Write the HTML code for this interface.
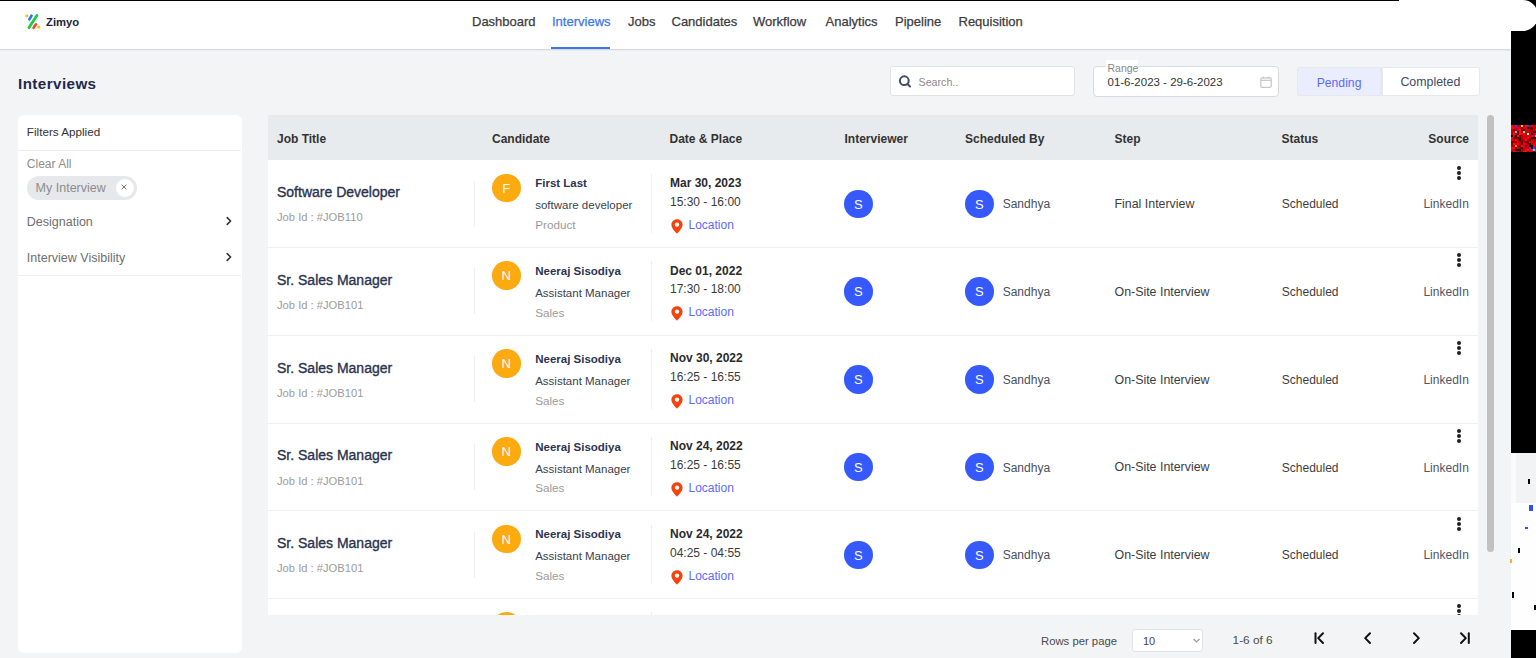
<!DOCTYPE html>
<html><head><meta charset="utf-8"><style>
html,body{margin:0;padding:0;}
body{width:1536px;height:658px;overflow:hidden;position:relative;background:#f3f4f6;font-family:"Liberation Sans", sans-serif;}
.t{position:absolute;line-height:1;white-space:nowrap;}
.r{position:absolute;}
.av{position:absolute;width:28.6px;height:28.6px;border-radius:50%;color:#fff;font-size:13px;line-height:30.2px;text-align:center;}
.av2{position:absolute;width:28.7px;height:28.7px;border-radius:50%;background:#3659fe;color:#fff;font-size:13px;line-height:30.2px;text-align:center;}
.dot{position:absolute;width:4px;height:4px;border-radius:50%;background:#1e1e1e;}
</style></head><body>
<div class="r" style="left:0px;top:0px;width:1536px;height:49px;background:#ffffff;"></div>
<div class="r" style="left:0px;top:49px;width:1511px;height:1px;background:#d7d9dc;"></div>
<div class="r" style="left:0px;top:50px;width:1511px;height:1px;background:#e9ebee;"></div>
<div class="r" style="left:0px;top:0px;width:1399px;height:1px;background:#000;"></div>
<svg class="r" style="left:22px;top:12px" width="20" height="20" viewBox="0 0 20 20">
<g stroke-linecap="round" fill="none">
<circle cx="4.85" cy="3.8" r="1.6" fill="#f9c512" stroke="none"/>
<line x1="9.5" y1="3.6" x2="7.4" y2="7.3" stroke="#1f7af6" stroke-width="2.7"/>
<line x1="15.0" y1="3.3" x2="6.9" y2="15.7" stroke="#1dc93e" stroke-width="2.7"/>
<line x1="14.0" y1="12.3" x2="11.6" y2="15.8" stroke="#e8522a" stroke-width="2.7"/>
<circle cx="16.8" cy="15.2" r="1.6" fill="#f9c512" stroke="none"/>
</g></svg>
<div class="t" style="left:46px;top:17.23px;font-size:11.3px;color:#1a2638;font-weight:bold;">Zimyo</div>
<div class="t" style="left:472px;top:15.20px;font-size:13px;color:#3c3c3c;font-weight:normal;-webkit-text-stroke:0.25px #3c3c3c;">Dashboard</div>
<div class="t" style="left:552px;top:15.20px;font-size:13px;color:#3a78ea;font-weight:normal;-webkit-text-stroke:0.25px #3a78ea;">Interviews</div>
<div class="t" style="left:628px;top:15.20px;font-size:13px;color:#3c3c3c;font-weight:normal;-webkit-text-stroke:0.25px #3c3c3c;">Jobs</div>
<div class="t" style="left:671.5px;top:15.20px;font-size:13px;color:#3c3c3c;font-weight:normal;-webkit-text-stroke:0.25px #3c3c3c;">Candidates</div>
<div class="t" style="left:753px;top:15.20px;font-size:13px;color:#3c3c3c;font-weight:normal;-webkit-text-stroke:0.25px #3c3c3c;">Workflow</div>
<div class="t" style="left:825.5px;top:15.20px;font-size:13px;color:#3c3c3c;font-weight:normal;-webkit-text-stroke:0.25px #3c3c3c;">Analytics</div>
<div class="t" style="left:895px;top:15.20px;font-size:13px;color:#3c3c3c;font-weight:normal;-webkit-text-stroke:0.25px #3c3c3c;">Pipeline</div>
<div class="t" style="left:958.5px;top:15.20px;font-size:13px;color:#3c3c3c;font-weight:normal;-webkit-text-stroke:0.25px #3c3c3c;">Requisition</div>
<div class="r" style="left:551px;top:47px;width:59px;height:2px;background:#3a78ea;"></div>
<div class="t" style="left:18px;top:75.93px;font-size:15.2px;color:#1d2a4d;font-weight:bold;letter-spacing:0.42px;">Interviews</div>
<div class="r" style="left:890px;top:66px;width:185px;height:30px;background:#fff;border:1px solid #e1e3e7;border-radius:3px;box-sizing:border-box;"></div>
<svg class="r" style="left:897px;top:73px" width="16" height="16" viewBox="0 0 16 16">
<circle cx="7.3" cy="7.7" r="4.4" stroke="#414c63" stroke-width="2" fill="none"/>
<line x1="10.5" y1="11" x2="13" y2="13.5" stroke="#414c63" stroke-width="2" stroke-linecap="round"/>
</svg>
<div class="t" style="left:918.5px;top:76.84px;font-size:10.7px;color:#8b8b8b;font-weight:normal;">Search..</div>
<div class="r" style="left:1093px;top:66px;width:186px;height:31px;background:#fff;border:1px solid #d8dade;border-radius:4px;box-sizing:border-box;"></div>
<div class="r" style="left:1106px;top:60px;width:32px;height:8px;background:#fff;"></div>
<div class="t" style="left:1107.5px;top:62.91px;font-size:10.5px;color:#868686;font-weight:normal;">Range</div>
<div class="t" style="left:1107.5px;top:77.07px;font-size:11.5px;color:#333;font-weight:normal;">01-6-2023 - 29-6-2023</div>
<svg class="r" style="left:1259px;top:75px" width="14" height="14" viewBox="0 0 14 14">
<rect x="1.8" y="2.8" width="10.4" height="9.6" rx="1.2" stroke="#c6c6c6" stroke-width="1.2" fill="none"/>
<line x1="1.8" y1="5.3" x2="12.2" y2="5.3" stroke="#c6c6c6" stroke-width="1.2"/>
<line x1="4.5" y1="1.5" x2="4.5" y2="3.5" stroke="#c6c6c6" stroke-width="1.2"/>
<line x1="9.5" y1="1.5" x2="9.5" y2="3.5" stroke="#c6c6c6" stroke-width="1.2"/>
</svg>
<div class="r" style="left:1297px;top:67px;width:183px;height:29px;background:#e6e8ec;border-radius:3px;"></div>
<div class="r" style="left:1298px;top:68px;width:82px;height:27px;background:#e9edfd;border-radius:2px 0 0 2px;"></div>
<div class="r" style="left:1382.5px;top:68px;width:96.5px;height:27px;background:#fff;border-radius:0 2px 2px 0;"></div>
<div class="t" style="left:1316.7px;top:76.57px;font-size:12.2px;color:#5b6cf2;font-weight:normal;">Pending</div>
<div class="t" style="left:1400.4px;top:76.40px;font-size:12.4px;color:#3d4a66;font-weight:normal;">Completed</div>
<div class="r" style="left:18px;top:115px;width:223.5px;height:538px;background:#fff;border-radius:6px;"></div>
<div class="t" style="left:26.8px;top:126.30px;font-size:11.7px;color:#333;font-weight:normal;">Filters Applied</div>
<div class="r" style="left:18px;top:150px;width:223px;height:1px;background:#eceef1;"></div>
<div class="t" style="left:26.8px;top:158.14px;font-size:12px;color:#8c8c8c;font-weight:normal;">Clear All</div>
<div class="r" style="left:26.5px;top:175.5px;width:110px;height:24px;background:#e7e8ec;border-radius:12px;"></div>
<div class="t" style="left:35.6px;top:182.22px;font-size:12.5px;color:#8c8c8c;font-weight:normal;">My Interview</div>
<div class="r" style="left:115.5px;top:178.5px;width:18px;height:18px;background:#fff;border-radius:50%;"></div>
<svg class="r" style="left:119.9px;top:183.1px" width="8" height="8" viewBox="0 0 8 8">
<line x1="1.6" y1="1.6" x2="6.4" y2="6.4" stroke="#666" stroke-width="0.9"/>
<line x1="6.4" y1="1.6" x2="1.6" y2="6.4" stroke="#666" stroke-width="0.9"/>
</svg>
<div class="t" style="left:26.8px;top:215.72px;font-size:12.5px;color:#6f6f6f;font-weight:normal;">Designation</div>
<div class="t" style="left:26.8px;top:251.82px;font-size:12.5px;color:#6f6f6f;font-weight:normal;">Interview Visibility</div>
<svg class="r" style="left:224px;top:215px" width="10" height="12" viewBox="0 0 10 12">
<polyline points="3.2,2.6 6.6,6 3.2,9.4" stroke="#333" stroke-width="1.6" fill="none" stroke-linecap="round" stroke-linejoin="round"/>
</svg>
<svg class="r" style="left:224px;top:251.3px" width="10" height="12" viewBox="0 0 10 12">
<polyline points="3.2,2.6 6.6,6 3.2,9.4" stroke="#333" stroke-width="1.6" fill="none" stroke-linecap="round" stroke-linejoin="round"/>
</svg>
<div class="r" style="left:18px;top:275px;width:223px;height:1px;background:#eceef1;"></div>
<div class="r" style="left:268px;top:115px;width:1210px;height:500px;background:#fff;overflow:hidden">
<div class="r" style="left:0px;top:0px;width:1210px;height:45px;background:#e8ebee;"></div>
<div class="t" style="left:9px;top:17.84px;font-size:12px;color:#333;font-weight:bold;">Job Title</div>
<div class="t" style="left:224px;top:17.84px;font-size:12px;color:#333;font-weight:bold;">Candidate</div>
<div class="t" style="left:401.5px;top:17.84px;font-size:12px;color:#333;font-weight:bold;">Date &amp; Place</div>
<div class="t" style="left:576.5px;top:17.84px;font-size:12px;color:#333;font-weight:bold;">Interviewer</div>
<div class="t" style="left:697px;top:17.84px;font-size:12px;color:#333;font-weight:bold;">Scheduled By</div>
<div class="t" style="left:846.5px;top:17.84px;font-size:12px;color:#333;font-weight:bold;">Step</div>
<div class="t" style="left:1013.5px;top:17.84px;font-size:12px;color:#333;font-weight:bold;">Status</div>
<div class="t" style="right:9px;top:17.84px;font-size:12px;color:#333;font-weight:bold;">Source</div>
<div class="r" style="left:0px;top:132.0px;width:1210px;height:1px;background:#eef0f2;"></div>
<div class="t" style="left:9px;top:70.05px;font-size:14px;color:#2a3350;font-weight:normal;-webkit-text-stroke:0.35px #2a3350;">Software Developer</div>
<div class="t" style="left:9px;top:97.32px;font-size:11.2px;color:#9b9b9b;font-weight:normal;">Job Id : #JOB110</div>
<div class="r" style="left:206px;top:65.5px;width:1px;height:46px;background:#eeeff1;"></div>
<div class="av" style="left:224px;top:58.7px;background:#fbaa10">F</div>
<div class="t" style="left:267.20000000000005px;top:63.27px;font-size:11.5px;color:#2d3450;font-weight:bold;">First Last</div>
<div class="t" style="left:267.20000000000005px;top:85.27px;font-size:11.5px;color:#3a3f4d;font-weight:normal;">software developer</div>
<div class="t" style="left:267.20000000000005px;top:104.10px;font-size:11.7px;color:#9b9b9b;font-weight:normal;">Product</div>
<div class="r" style="left:383px;top:58.7px;width:1px;height:59.5px;background:#eeeff1;"></div>
<div class="t" style="left:402px;top:61.84px;font-size:12px;color:#2b2b2b;font-weight:bold;">Mar 30, 2023</div>
<div class="t" style="left:402px;top:80.54px;font-size:12px;color:#3a3a3a;font-weight:normal;">15:30 - 16:00</div>
<svg class="r" style="left:402.5px;top:103.6px" width="12" height="15" viewBox="0 0 12 15">
<path d="M6 0.3C2.9 0.3 0.4 2.7 0.4 5.8c0 3.6 4.3 7.6 5.6 8.9c1.3-1.3 5.6-5.3 5.6-8.9C11.6 2.7 9.1 0.3 6 0.3z" fill="#f4430f"/>
<circle cx="6" cy="5.6" r="2.2" fill="#fff"/></svg>
<div class="t" style="left:420.5px;top:103.64px;font-size:12px;color:#5b6cf7;font-weight:normal;">Location</div>
<div class="av2" style="left:576px;top:74.5px">S</div>
<div class="av2" style="left:697px;top:74.5px">S</div>
<div class="t" style="left:734.7px;top:83.44px;font-size:12px;color:#4a4f5c;font-weight:normal;">Sandhya</div>
<div class="t" style="left:846.5px;top:83.10px;font-size:12.4px;color:#3d3d3d;font-weight:normal;">Final Interview</div>
<div class="t" style="left:1013.8px;top:83.44px;font-size:12px;color:#3d3d3d;font-weight:normal;">Scheduled</div>
<div class="t" style="right:9.200000000000045px;top:83.44px;font-size:12px;color:#505560">LinkedIn</div>
<div class="dot" style="left:1189.3px;top:50.7px"></div>
<div class="dot" style="left:1189.3px;top:55.6px"></div>
<div class="dot" style="left:1189.3px;top:60.6px"></div>
<div class="r" style="left:0px;top:219.75px;width:1210px;height:1px;background:#eef0f2;"></div>
<div class="t" style="left:9px;top:157.80px;font-size:14px;color:#2a3350;font-weight:normal;-webkit-text-stroke:0.35px #2a3350;">Sr. Sales Manager</div>
<div class="t" style="left:9px;top:185.07px;font-size:11.2px;color:#9b9b9b;font-weight:normal;">Job Id : #JOB101</div>
<div class="r" style="left:206px;top:153.25px;width:1px;height:46px;background:#eeeff1;"></div>
<div class="av" style="left:224px;top:146.45px;background:#fbaa10">N</div>
<div class="t" style="left:267.20000000000005px;top:151.02px;font-size:11.5px;color:#2d3450;font-weight:bold;">Neeraj Sisodiya</div>
<div class="t" style="left:267.20000000000005px;top:173.02px;font-size:11.5px;color:#3a3f4d;font-weight:normal;">Assistant Manager</div>
<div class="t" style="left:267.20000000000005px;top:191.85px;font-size:11.7px;color:#9b9b9b;font-weight:normal;">Sales</div>
<div class="r" style="left:383px;top:146.45px;width:1px;height:59.5px;background:#eeeff1;"></div>
<div class="t" style="left:402px;top:149.59px;font-size:12px;color:#2b2b2b;font-weight:bold;">Dec 01, 2022</div>
<div class="t" style="left:402px;top:168.29px;font-size:12px;color:#3a3a3a;font-weight:normal;">17:30 - 18:00</div>
<svg class="r" style="left:402.5px;top:191.35px" width="12" height="15" viewBox="0 0 12 15">
<path d="M6 0.3C2.9 0.3 0.4 2.7 0.4 5.8c0 3.6 4.3 7.6 5.6 8.9c1.3-1.3 5.6-5.3 5.6-8.9C11.6 2.7 9.1 0.3 6 0.3z" fill="#f4430f"/>
<circle cx="6" cy="5.6" r="2.2" fill="#fff"/></svg>
<div class="t" style="left:420.5px;top:191.39px;font-size:12px;color:#5b6cf7;font-weight:normal;">Location</div>
<div class="av2" style="left:576px;top:162.25px">S</div>
<div class="av2" style="left:697px;top:162.25px">S</div>
<div class="t" style="left:734.7px;top:171.19px;font-size:12px;color:#4a4f5c;font-weight:normal;">Sandhya</div>
<div class="t" style="left:846.5px;top:170.85px;font-size:12.4px;color:#3d3d3d;font-weight:normal;">On-Site Interview</div>
<div class="t" style="left:1013.8px;top:171.19px;font-size:12px;color:#3d3d3d;font-weight:normal;">Scheduled</div>
<div class="t" style="right:9.200000000000045px;top:171.19px;font-size:12px;color:#505560">LinkedIn</div>
<div class="dot" style="left:1189.3px;top:138.45px"></div>
<div class="dot" style="left:1189.3px;top:143.35px"></div>
<div class="dot" style="left:1189.3px;top:148.35px"></div>
<div class="r" style="left:0px;top:307.5px;width:1210px;height:1px;background:#eef0f2;"></div>
<div class="t" style="left:9px;top:245.55px;font-size:14px;color:#2a3350;font-weight:normal;-webkit-text-stroke:0.35px #2a3350;">Sr. Sales Manager</div>
<div class="t" style="left:9px;top:272.82px;font-size:11.2px;color:#9b9b9b;font-weight:normal;">Job Id : #JOB101</div>
<div class="r" style="left:206px;top:241.0px;width:1px;height:46px;background:#eeeff1;"></div>
<div class="av" style="left:224px;top:234.2px;background:#fbaa10">N</div>
<div class="t" style="left:267.20000000000005px;top:238.77px;font-size:11.5px;color:#2d3450;font-weight:bold;">Neeraj Sisodiya</div>
<div class="t" style="left:267.20000000000005px;top:260.77px;font-size:11.5px;color:#3a3f4d;font-weight:normal;">Assistant Manager</div>
<div class="t" style="left:267.20000000000005px;top:279.60px;font-size:11.7px;color:#9b9b9b;font-weight:normal;">Sales</div>
<div class="r" style="left:383px;top:234.2px;width:1px;height:59.5px;background:#eeeff1;"></div>
<div class="t" style="left:402px;top:237.34px;font-size:12px;color:#2b2b2b;font-weight:bold;">Nov 30, 2022</div>
<div class="t" style="left:402px;top:256.04px;font-size:12px;color:#3a3a3a;font-weight:normal;">16:25 - 16:55</div>
<svg class="r" style="left:402.5px;top:279.1px" width="12" height="15" viewBox="0 0 12 15">
<path d="M6 0.3C2.9 0.3 0.4 2.7 0.4 5.8c0 3.6 4.3 7.6 5.6 8.9c1.3-1.3 5.6-5.3 5.6-8.9C11.6 2.7 9.1 0.3 6 0.3z" fill="#f4430f"/>
<circle cx="6" cy="5.6" r="2.2" fill="#fff"/></svg>
<div class="t" style="left:420.5px;top:279.14px;font-size:12px;color:#5b6cf7;font-weight:normal;">Location</div>
<div class="av2" style="left:576px;top:250.0px">S</div>
<div class="av2" style="left:697px;top:250.0px">S</div>
<div class="t" style="left:734.7px;top:258.94px;font-size:12px;color:#4a4f5c;font-weight:normal;">Sandhya</div>
<div class="t" style="left:846.5px;top:258.60px;font-size:12.4px;color:#3d3d3d;font-weight:normal;">On-Site Interview</div>
<div class="t" style="left:1013.8px;top:258.94px;font-size:12px;color:#3d3d3d;font-weight:normal;">Scheduled</div>
<div class="t" style="right:9.200000000000045px;top:258.94px;font-size:12px;color:#505560">LinkedIn</div>
<div class="dot" style="left:1189.3px;top:226.2px"></div>
<div class="dot" style="left:1189.3px;top:231.1px"></div>
<div class="dot" style="left:1189.3px;top:236.1px"></div>
<div class="r" style="left:0px;top:395.25px;width:1210px;height:1px;background:#eef0f2;"></div>
<div class="t" style="left:9px;top:333.30px;font-size:14px;color:#2a3350;font-weight:normal;-webkit-text-stroke:0.35px #2a3350;">Sr. Sales Manager</div>
<div class="t" style="left:9px;top:360.57px;font-size:11.2px;color:#9b9b9b;font-weight:normal;">Job Id : #JOB101</div>
<div class="r" style="left:206px;top:328.75px;width:1px;height:46px;background:#eeeff1;"></div>
<div class="av" style="left:224px;top:321.95px;background:#fbaa10">N</div>
<div class="t" style="left:267.20000000000005px;top:326.52px;font-size:11.5px;color:#2d3450;font-weight:bold;">Neeraj Sisodiya</div>
<div class="t" style="left:267.20000000000005px;top:348.52px;font-size:11.5px;color:#3a3f4d;font-weight:normal;">Assistant Manager</div>
<div class="t" style="left:267.20000000000005px;top:367.35px;font-size:11.7px;color:#9b9b9b;font-weight:normal;">Sales</div>
<div class="r" style="left:383px;top:321.95px;width:1px;height:59.5px;background:#eeeff1;"></div>
<div class="t" style="left:402px;top:325.09px;font-size:12px;color:#2b2b2b;font-weight:bold;">Nov 24, 2022</div>
<div class="t" style="left:402px;top:343.79px;font-size:12px;color:#3a3a3a;font-weight:normal;">16:25 - 16:55</div>
<svg class="r" style="left:402.5px;top:366.85px" width="12" height="15" viewBox="0 0 12 15">
<path d="M6 0.3C2.9 0.3 0.4 2.7 0.4 5.8c0 3.6 4.3 7.6 5.6 8.9c1.3-1.3 5.6-5.3 5.6-8.9C11.6 2.7 9.1 0.3 6 0.3z" fill="#f4430f"/>
<circle cx="6" cy="5.6" r="2.2" fill="#fff"/></svg>
<div class="t" style="left:420.5px;top:366.89px;font-size:12px;color:#5b6cf7;font-weight:normal;">Location</div>
<div class="av2" style="left:576px;top:337.75px">S</div>
<div class="av2" style="left:697px;top:337.75px">S</div>
<div class="t" style="left:734.7px;top:346.69px;font-size:12px;color:#4a4f5c;font-weight:normal;">Sandhya</div>
<div class="t" style="left:846.5px;top:346.35px;font-size:12.4px;color:#3d3d3d;font-weight:normal;">On-Site Interview</div>
<div class="t" style="left:1013.8px;top:346.69px;font-size:12px;color:#3d3d3d;font-weight:normal;">Scheduled</div>
<div class="t" style="right:9.200000000000045px;top:346.69px;font-size:12px;color:#505560">LinkedIn</div>
<div class="dot" style="left:1189.3px;top:313.95px"></div>
<div class="dot" style="left:1189.3px;top:318.85px"></div>
<div class="dot" style="left:1189.3px;top:323.85px"></div>
<div class="r" style="left:0px;top:483.0px;width:1210px;height:1px;background:#eef0f2;"></div>
<div class="t" style="left:9px;top:421.05px;font-size:14px;color:#2a3350;font-weight:normal;-webkit-text-stroke:0.35px #2a3350;">Sr. Sales Manager</div>
<div class="t" style="left:9px;top:448.32px;font-size:11.2px;color:#9b9b9b;font-weight:normal;">Job Id : #JOB101</div>
<div class="r" style="left:206px;top:416.5px;width:1px;height:46px;background:#eeeff1;"></div>
<div class="av" style="left:224px;top:409.7px;background:#fbaa10">N</div>
<div class="t" style="left:267.20000000000005px;top:414.27px;font-size:11.5px;color:#2d3450;font-weight:bold;">Neeraj Sisodiya</div>
<div class="t" style="left:267.20000000000005px;top:436.27px;font-size:11.5px;color:#3a3f4d;font-weight:normal;">Assistant Manager</div>
<div class="t" style="left:267.20000000000005px;top:455.10px;font-size:11.7px;color:#9b9b9b;font-weight:normal;">Sales</div>
<div class="r" style="left:383px;top:409.7px;width:1px;height:59.5px;background:#eeeff1;"></div>
<div class="t" style="left:402px;top:412.84px;font-size:12px;color:#2b2b2b;font-weight:bold;">Nov 24, 2022</div>
<div class="t" style="left:402px;top:431.54px;font-size:12px;color:#3a3a3a;font-weight:normal;">04:25 - 04:55</div>
<svg class="r" style="left:402.5px;top:454.6px" width="12" height="15" viewBox="0 0 12 15">
<path d="M6 0.3C2.9 0.3 0.4 2.7 0.4 5.8c0 3.6 4.3 7.6 5.6 8.9c1.3-1.3 5.6-5.3 5.6-8.9C11.6 2.7 9.1 0.3 6 0.3z" fill="#f4430f"/>
<circle cx="6" cy="5.6" r="2.2" fill="#fff"/></svg>
<div class="t" style="left:420.5px;top:454.64px;font-size:12px;color:#5b6cf7;font-weight:normal;">Location</div>
<div class="av2" style="left:576px;top:425.5px">S</div>
<div class="av2" style="left:697px;top:425.5px">S</div>
<div class="t" style="left:734.7px;top:434.44px;font-size:12px;color:#4a4f5c;font-weight:normal;">Sandhya</div>
<div class="t" style="left:846.5px;top:434.10px;font-size:12.4px;color:#3d3d3d;font-weight:normal;">On-Site Interview</div>
<div class="t" style="left:1013.8px;top:434.44px;font-size:12px;color:#3d3d3d;font-weight:normal;">Scheduled</div>
<div class="t" style="right:9.200000000000045px;top:434.44px;font-size:12px;color:#505560">LinkedIn</div>
<div class="dot" style="left:1189.3px;top:401.7px"></div>
<div class="dot" style="left:1189.3px;top:406.6px"></div>
<div class="dot" style="left:1189.3px;top:411.6px"></div>
<div class="r" style="left:0px;top:570.75px;width:1210px;height:1px;background:#eef0f2;"></div>
<div class="t" style="left:9px;top:508.80px;font-size:14px;color:#2a3350;font-weight:normal;-webkit-text-stroke:0.35px #2a3350;">Sr. Sales Manager</div>
<div class="t" style="left:9px;top:536.07px;font-size:11.2px;color:#9b9b9b;font-weight:normal;">Job Id : #JOB101</div>
<div class="r" style="left:206px;top:504.25px;width:1px;height:46px;background:#eeeff1;"></div>
<div class="av" style="left:224px;top:497.45px;background:#fbaa10">N</div>
<div class="t" style="left:267.20000000000005px;top:502.02px;font-size:11.5px;color:#2d3450;font-weight:bold;">Neeraj Sisodiya</div>
<div class="t" style="left:267.20000000000005px;top:524.02px;font-size:11.5px;color:#3a3f4d;font-weight:normal;">Assistant Manager</div>
<div class="t" style="left:267.20000000000005px;top:542.85px;font-size:11.7px;color:#9b9b9b;font-weight:normal;">Sales</div>
<div class="r" style="left:383px;top:497.45px;width:1px;height:59.5px;background:#eeeff1;"></div>
<div class="t" style="left:402px;top:500.59px;font-size:12px;color:#2b2b2b;font-weight:bold;">Nov 24, 2022</div>
<div class="t" style="left:402px;top:519.29px;font-size:12px;color:#3a3a3a;font-weight:normal;">04:25 - 04:55</div>
<svg class="r" style="left:402.5px;top:542.35px" width="12" height="15" viewBox="0 0 12 15">
<path d="M6 0.3C2.9 0.3 0.4 2.7 0.4 5.8c0 3.6 4.3 7.6 5.6 8.9c1.3-1.3 5.6-5.3 5.6-8.9C11.6 2.7 9.1 0.3 6 0.3z" fill="#f4430f"/>
<circle cx="6" cy="5.6" r="2.2" fill="#fff"/></svg>
<div class="t" style="left:420.5px;top:542.39px;font-size:12px;color:#5b6cf7;font-weight:normal;">Location</div>
<div class="av2" style="left:576px;top:513.25px">S</div>
<div class="av2" style="left:697px;top:513.25px">S</div>
<div class="t" style="left:734.7px;top:522.19px;font-size:12px;color:#4a4f5c;font-weight:normal;">Sandhya</div>
<div class="t" style="left:846.5px;top:521.85px;font-size:12.4px;color:#3d3d3d;font-weight:normal;">On-Site Interview</div>
<div class="t" style="left:1013.8px;top:522.19px;font-size:12px;color:#3d3d3d;font-weight:normal;">Scheduled</div>
<div class="t" style="right:9.200000000000045px;top:522.19px;font-size:12px;color:#505560">LinkedIn</div>
<div class="dot" style="left:1189.3px;top:489.45px"></div>
<div class="dot" style="left:1189.3px;top:494.35px"></div>
<div class="dot" style="left:1189.3px;top:499.35px"></div>
</div>
<div class="r" style="left:1487px;top:115px;width:7px;height:437px;background:#c1c1c1;border-radius:4px;"></div>
<div class="t" style="left:1041px;top:635.53px;font-size:11.3px;color:#4a4a4a;font-weight:normal;">Rows per page</div>
<div class="r" style="left:1132px;top:629px;width:71px;height:23px;background:#fff;border:1px solid #e2e3e6;border-radius:3px;box-sizing:border-box;"></div>
<div class="t" style="left:1143px;top:635.79px;font-size:11px;color:#444;font-weight:normal;">10</div>
<svg class="r" style="left:1192px;top:637px" width="9" height="8" viewBox="0 0 9 8">
<polyline points="1.5,2 4.5,5 7.5,2" stroke="#9a9a9a" stroke-width="1.2" fill="none"/></svg>
<div class="t" style="left:1232.6px;top:635.11px;font-size:11.8px;color:#4a4a4a;font-weight:normal;">1-6 of 6</div>
<svg class="r" style="left:1310px;top:628px" width="165" height="20" viewBox="0 0 165 20">
<g stroke="#111" stroke-width="2" fill="none" stroke-linecap="round" stroke-linejoin="round">
<line x1="5.5" y1="5.3" x2="5.5" y2="15"/>
<polyline points="13,5.3 8.2,10.15 13,15"/>
<polyline points="60,5.3 55.2,10.15 60,15"/>
<polyline points="104,5.3 108.8,10.15 104,15"/>
<polyline points="151,5.3 155.8,10.15 151,15"/>
<line x1="158.8" y1="5.3" x2="158.8" y2="15"/>
</g></svg>
<div class="r" style="left:1511px;top:0px;width:25px;height:658px;background:#000;"></div>
<div class="r" style="left:1399px;top:0px;width:139px;height:31px;background:#fff;border-radius:0 16px 16px 0;"></div>
<div class="r" style="left:1511px;top:453px;width:25px;height:50px;background:#f2f3f5;"></div>
<div class="r" style="left:1511px;top:453px;width:5px;height:50px;background:#fbfbfc;"></div>
<div class="r" style="left:1511px;top:503px;width:25px;height:127px;background:#fefefe;"></div>
<svg class="r" style="left:1511px;top:125px" width="25" height="27" shape-rendering="crispEdges"><rect x="0" y="0" width="2" height="2" fill="#ff0010"/><rect x="2" y="0" width="2" height="2" fill="#d00000"/><rect x="4" y="0" width="2" height="2" fill="#3040ff"/><rect x="6" y="0" width="2" height="2" fill="#d00000"/><rect x="8" y="0" width="2" height="2" fill="#b00000"/><rect x="10" y="0" width="2" height="2" fill="#ffd000"/><rect x="12" y="0" width="2" height="2" fill="#b00000"/><rect x="14" y="0" width="2" height="2" fill="#ff1020"/><rect x="16" y="0" width="2" height="2" fill="#3040ff"/><rect x="18" y="0" width="2" height="2" fill="#d0001a"/><rect x="20" y="0" width="2" height="2" fill="#d0001a"/><rect x="22" y="0" width="2" height="2" fill="#d00000"/><rect x="24" y="0" width="2" height="2" fill="#d00000"/><rect x="0" y="2" width="2" height="2" fill="#ff0010"/><rect x="2" y="2" width="2" height="2" fill="#ff0010"/><rect x="4" y="2" width="2" height="2" fill="#d0001a"/><rect x="6" y="2" width="2" height="2" fill="#ff0010"/><rect x="8" y="2" width="2" height="2" fill="#d0001a"/><rect x="10" y="2" width="2" height="2" fill="#900000"/><rect x="12" y="2" width="2" height="2" fill="#e00010"/><rect x="14" y="2" width="2" height="2" fill="#d0001a"/><rect x="16" y="2" width="2" height="2" fill="#200000"/><rect x="18" y="2" width="2" height="2" fill="#900000"/><rect x="20" y="2" width="2" height="2" fill="#600000"/><rect x="22" y="2" width="2" height="2" fill="#b00000"/><rect x="24" y="2" width="2" height="2" fill="#b00000"/><rect x="0" y="4" width="2" height="2" fill="#c00008"/><rect x="2" y="4" width="2" height="2" fill="#900000"/><rect x="4" y="4" width="2" height="2" fill="#c00008"/><rect x="6" y="4" width="2" height="2" fill="#e00010"/><rect x="8" y="4" width="2" height="2" fill="#ff1020"/><rect x="10" y="4" width="2" height="2" fill="#900000"/><rect x="12" y="4" width="2" height="2" fill="#600000"/><rect x="14" y="4" width="2" height="2" fill="#e00010"/><rect x="16" y="4" width="2" height="2" fill="#d0001a"/><rect x="18" y="4" width="2" height="2" fill="#900000"/><rect x="20" y="4" width="2" height="2" fill="#900000"/><rect x="22" y="4" width="2" height="2" fill="#d0001a"/><rect x="24" y="4" width="2" height="2" fill="#e00010"/><rect x="0" y="6" width="2" height="2" fill="#c00008"/><rect x="2" y="6" width="2" height="2" fill="#e00010"/><rect x="4" y="6" width="2" height="2" fill="#20e0ff"/><rect x="6" y="6" width="2" height="2" fill="#600000"/><rect x="8" y="6" width="2" height="2" fill="#ff1020"/><rect x="10" y="6" width="2" height="2" fill="#900000"/><rect x="12" y="6" width="2" height="2" fill="#80e080"/><rect x="14" y="6" width="2" height="2" fill="#d0001a"/><rect x="16" y="6" width="2" height="2" fill="#d00000"/><rect x="18" y="6" width="2" height="2" fill="#c00008"/><rect x="20" y="6" width="2" height="2" fill="#b00000"/><rect x="22" y="6" width="2" height="2" fill="#600000"/><rect x="24" y="6" width="2" height="2" fill="#600000"/><rect x="0" y="8" width="2" height="2" fill="#c00008"/><rect x="2" y="8" width="2" height="2" fill="#ff1020"/><rect x="4" y="8" width="2" height="2" fill="#c00008"/><rect x="6" y="8" width="2" height="2" fill="#900000"/><rect x="8" y="8" width="2" height="2" fill="#ff1020"/><rect x="10" y="8" width="2" height="2" fill="#ff0010"/><rect x="12" y="8" width="2" height="2" fill="#ff0010"/><rect x="14" y="8" width="2" height="2" fill="#b00000"/><rect x="16" y="8" width="2" height="2" fill="#ffffff"/><rect x="18" y="8" width="2" height="2" fill="#d00000"/><rect x="20" y="8" width="2" height="2" fill="#200000"/><rect x="22" y="8" width="2" height="2" fill="#d0001a"/><rect x="24" y="8" width="2" height="2" fill="#ff0010"/><rect x="0" y="10" width="2" height="2" fill="#200000"/><rect x="2" y="10" width="2" height="2" fill="#d00000"/><rect x="4" y="10" width="2" height="2" fill="#200000"/><rect x="6" y="10" width="2" height="2" fill="#ff1020"/><rect x="8" y="10" width="2" height="2" fill="#600000"/><rect x="10" y="10" width="2" height="2" fill="#d00000"/><rect x="12" y="10" width="2" height="2" fill="#b00000"/><rect x="14" y="10" width="2" height="2" fill="#e00010"/><rect x="16" y="10" width="2" height="2" fill="#d00000"/><rect x="18" y="10" width="2" height="2" fill="#d0001a"/><rect x="20" y="10" width="2" height="2" fill="#e00010"/><rect x="22" y="10" width="2" height="2" fill="#d0001a"/><rect x="24" y="10" width="2" height="2" fill="#ff9020"/><rect x="0" y="12" width="2" height="2" fill="#ff0010"/><rect x="2" y="12" width="2" height="2" fill="#900000"/><rect x="4" y="12" width="2" height="2" fill="#600000"/><rect x="6" y="12" width="2" height="2" fill="#600000"/><rect x="8" y="12" width="2" height="2" fill="#600000"/><rect x="10" y="12" width="2" height="2" fill="#c00008"/><rect x="12" y="12" width="2" height="2" fill="#e00010"/><rect x="14" y="12" width="2" height="2" fill="#c00008"/><rect x="16" y="12" width="2" height="2" fill="#ff0010"/><rect x="18" y="12" width="2" height="2" fill="#b00000"/><rect x="20" y="12" width="2" height="2" fill="#200000"/><rect x="22" y="12" width="2" height="2" fill="#200000"/><rect x="24" y="12" width="2" height="2" fill="#200000"/><rect x="0" y="14" width="2" height="2" fill="#e00010"/><rect x="2" y="14" width="2" height="2" fill="#c00008"/><rect x="4" y="14" width="2" height="2" fill="#ff0010"/><rect x="6" y="14" width="2" height="2" fill="#b00000"/><rect x="8" y="14" width="2" height="2" fill="#200000"/><rect x="10" y="14" width="2" height="2" fill="#b00000"/><rect x="12" y="14" width="2" height="2" fill="#b00000"/><rect x="14" y="14" width="2" height="2" fill="#ff1020"/><rect x="16" y="14" width="2" height="2" fill="#b00000"/><rect x="18" y="14" width="2" height="2" fill="#600000"/><rect x="20" y="14" width="2" height="2" fill="#d00000"/><rect x="22" y="14" width="2" height="2" fill="#c00008"/><rect x="24" y="14" width="2" height="2" fill="#b00000"/><rect x="0" y="16" width="2" height="2" fill="#900000"/><rect x="2" y="16" width="2" height="2" fill="#900000"/><rect x="4" y="16" width="2" height="2" fill="#900000"/><rect x="6" y="16" width="2" height="2" fill="#e00010"/><rect x="8" y="16" width="2" height="2" fill="#b00000"/><rect x="10" y="16" width="2" height="2" fill="#600000"/><rect x="12" y="16" width="2" height="2" fill="#d0001a"/><rect x="14" y="16" width="2" height="2" fill="#600000"/><rect x="16" y="16" width="2" height="2" fill="#900000"/><rect x="18" y="16" width="2" height="2" fill="#e00010"/><rect x="20" y="16" width="2" height="2" fill="#e00010"/><rect x="22" y="16" width="2" height="2" fill="#b00000"/><rect x="24" y="16" width="2" height="2" fill="#ff0010"/><rect x="0" y="18" width="2" height="2" fill="#900000"/><rect x="2" y="18" width="2" height="2" fill="#ff1020"/><rect x="4" y="18" width="2" height="2" fill="#e00010"/><rect x="6" y="18" width="2" height="2" fill="#ff0010"/><rect x="8" y="18" width="2" height="2" fill="#d00000"/><rect x="10" y="18" width="2" height="2" fill="#600000"/><rect x="12" y="18" width="2" height="2" fill="#ff0010"/><rect x="14" y="18" width="2" height="2" fill="#d0001a"/><rect x="16" y="18" width="2" height="2" fill="#900000"/><rect x="18" y="18" width="2" height="2" fill="#200000"/><rect x="20" y="18" width="2" height="2" fill="#d00000"/><rect x="22" y="18" width="2" height="2" fill="#e00010"/><rect x="24" y="18" width="2" height="2" fill="#ff0010"/><rect x="0" y="20" width="2" height="2" fill="#b00000"/><rect x="2" y="20" width="2" height="2" fill="#b00000"/><rect x="4" y="20" width="2" height="2" fill="#ff9020"/><rect x="6" y="20" width="2" height="2" fill="#b00000"/><rect x="8" y="20" width="2" height="2" fill="#900000"/><rect x="10" y="20" width="2" height="2" fill="#ff1020"/><rect x="12" y="20" width="2" height="2" fill="#d00000"/><rect x="14" y="20" width="2" height="2" fill="#900000"/><rect x="16" y="20" width="2" height="2" fill="#d0001a"/><rect x="18" y="20" width="2" height="2" fill="#200000"/><rect x="20" y="20" width="2" height="2" fill="#200000"/><rect x="22" y="20" width="2" height="2" fill="#ff0010"/><rect x="24" y="20" width="2" height="2" fill="#d00000"/><rect x="0" y="22" width="2" height="2" fill="#ff0010"/><rect x="2" y="22" width="2" height="2" fill="#ff0010"/><rect x="4" y="22" width="2" height="2" fill="#600000"/><rect x="6" y="22" width="2" height="2" fill="#e00010"/><rect x="8" y="22" width="2" height="2" fill="#900000"/><rect x="10" y="22" width="2" height="2" fill="#200000"/><rect x="12" y="22" width="2" height="2" fill="#e00010"/><rect x="14" y="22" width="2" height="2" fill="#d00000"/><rect x="16" y="22" width="2" height="2" fill="#c00008"/><rect x="18" y="22" width="2" height="2" fill="#3040ff"/><rect x="20" y="22" width="2" height="2" fill="#200000"/><rect x="22" y="22" width="2" height="2" fill="#3040ff"/><rect x="24" y="22" width="2" height="2" fill="#d0001a"/><rect x="0" y="24" width="2" height="2" fill="#d0001a"/><rect x="2" y="24" width="2" height="2" fill="#c00008"/><rect x="4" y="24" width="2" height="2" fill="#200000"/><rect x="6" y="24" width="2" height="2" fill="#200000"/><rect x="8" y="24" width="2" height="2" fill="#200000"/><rect x="10" y="24" width="2" height="2" fill="#c00008"/><rect x="12" y="24" width="2" height="2" fill="#b00000"/><rect x="14" y="24" width="2" height="2" fill="#ff0010"/><rect x="16" y="24" width="2" height="2" fill="#ff1020"/><rect x="18" y="24" width="2" height="2" fill="#e00010"/><rect x="20" y="24" width="2" height="2" fill="#ff1020"/><rect x="22" y="24" width="2" height="2" fill="#20e0ff"/><rect x="24" y="24" width="2" height="2" fill="#ff0010"/><rect x="0" y="26" width="2" height="2" fill="#900000"/><rect x="2" y="26" width="2" height="2" fill="#ff0010"/><rect x="4" y="26" width="2" height="2" fill="#b00000"/><rect x="6" y="26" width="2" height="2" fill="#e00010"/><rect x="8" y="26" width="2" height="2" fill="#600000"/><rect x="10" y="26" width="2" height="2" fill="#b00000"/><rect x="12" y="26" width="2" height="2" fill="#ff1020"/><rect x="14" y="26" width="2" height="2" fill="#ff1020"/><rect x="16" y="26" width="2" height="2" fill="#b00000"/><rect x="18" y="26" width="2" height="2" fill="#e00010"/><rect x="20" y="26" width="2" height="2" fill="#d00000"/><rect x="22" y="26" width="2" height="2" fill="#600000"/><rect x="24" y="26" width="2" height="2" fill="#d00000"/></svg>
<div class="r" style="left:1528px;top:479px;width:2px;height:5px;background:#000;"></div>
<div class="r" style="left:1529px;top:505px;width:4px;height:6px;background:#3050ff;"></div>
<div class="r" style="left:1525px;top:527px;width:3px;height:2px;background:#3050ff;"></div>
<div class="r" style="left:1518px;top:548px;width:2px;height:5px;background:#000;"></div>
<div class="r" style="left:1510px;top:559px;width:2px;height:4px;background:#f8b030;"></div>
<div class="r" style="left:1512px;top:592px;width:2px;height:6px;background:#000;"></div>
<div class="r" style="left:1534px;top:605px;width:2px;height:5px;background:#000;"></div>
</body></html>
